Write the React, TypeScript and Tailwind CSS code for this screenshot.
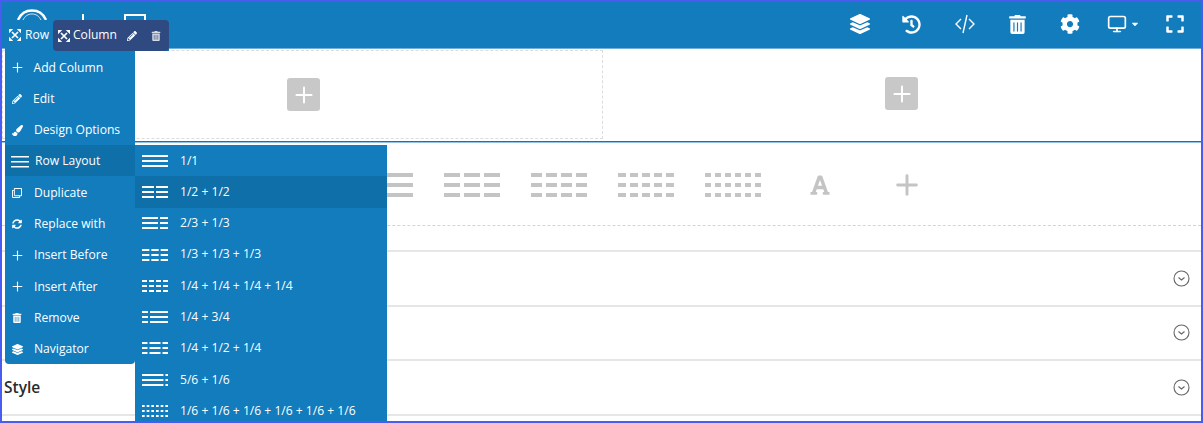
import { Fragment, type ReactNode } from "react";
import { Monitor, Plus } from "lucide-react";
import {
  FaCaretDown,
  FaCog,
  FaExpand,
  FaFont,
  FaHistory,
  FaLayerGroup,
  FaPaintBrush,
  FaPencilAlt,
  FaRegClone,
  FaSyncAlt,
  FaTrashAlt,
} from "react-icons/fa";

// 一行ごとの列比率を三段のバーで描く
function LayoutIcon({ cols, width = 26, h = 2 }: { cols: number[]; width?: number; h?: number }) {
  const total = cols.reduce((a, b) => a + b, 0);
  const gap = 2;
  const unit = (width - gap * (cols.length - 1)) / total;
  return (
    <svg width={width} height="12" viewBox={`0 0 ${width} 12`} className="shrink-0">
      {[0, 5, 10].map((y) => {
        let x = 0;
        return (
          <Fragment key={y}>
            {cols.map((c, i) => {
              const w = c * unit;
              const r = <rect key={i} x={x} y={y} width={w} height={h} fill="#fff" />;
              x += w + gap;
              return r;
            })}
          </Fragment>
        );
      })}
    </svg>
  );
}

function MoveIcon() {
  return (
    <svg width="12" height="12" viewBox="0 0 12 12" fill="#fff" className="shrink-0">
      <path d="M3 3l6 6M9 3l-6 6" stroke="#fff" strokeWidth="1.7" />
      <path d="M0 0H4.2L0 4.2zM7.8 0H12V4.2zM12 7.8V12H7.8zM4.2 12H0V7.8z" />
    </svg>
  );
}

function CodeIcon() {
  return (
    <svg width="20" height="20" viewBox="0 0 20 20" fill="none" stroke="#fff" strokeWidth="1.4" className="shrink-0 mr-[33px]">
      <path d="M6 5L1 10l5 5M14 5l5 5-5 5M12 1L8 19" />
    </svg>
  );
}

const rowMenu: { label: string; icon: ReactNode; ml: string; active?: boolean }[] = [
  { label: "Add Column", icon: <Plus size={15} strokeWidth={1.8} />, ml: "ml-[5.5px]" },
  { label: "Edit", icon: <FaPencilAlt size={10} />, ml: "ml-[5px]" },
  { label: "Design Options", icon: <FaPaintBrush size={11} />, ml: "ml-[6px]" },
  { label: "Row Layout", icon: <LayoutIcon cols={[1]} width={18} h={1.5} />, ml: "ml-[3px]", active: true },
  { label: "Duplicate", icon: <FaRegClone size={10} />, ml: "ml-[6px]" },
  { label: "Replace with", icon: <FaSyncAlt size={10} />, ml: "ml-[6px]" },
  { label: "Insert Before", icon: <Plus size={15} strokeWidth={1.8} />, ml: "ml-[6px]" },
  { label: "Insert After", icon: <Plus size={15} strokeWidth={1.8} />, ml: "ml-[6px]" },
  { label: "Remove", icon: <FaTrashAlt size={10} />, ml: "ml-[6px]" },
  { label: "Navigator", icon: <FaLayerGroup size={11} />, ml: "ml-[6px]" },
];

const layouts: { label: string; cols: number[]; active?: boolean }[] = [
  { label: "1/1", cols: [1] },
  { label: "1/2 + 1/2", cols: [1, 1], active: true },
  { label: "2/3 + 1/3", cols: [2, 1] },
  { label: "1/3 + 1/3 + 1/3", cols: [1, 1, 1] },
  { label: "1/4 + 1/4 + 1/4 + 1/4", cols: [1, 1, 1, 1] },
  { label: "1/4 + 3/4", cols: [1, 3] },
  { label: "1/4 + 1/2 + 1/4", cols: [1, 2, 1] },
  { label: "5/6 + 1/6", cols: [5, 0.6] },
  { label: "1/6 + 1/6 + 1/6 + 1/6 + 1/6 + 1/6", cols: [1, 1, 1, 1, 1, 1] },
];

function LargeLayout({ cols }: { cols: number[] }) {
  return (
    <div className="flex flex-col gap-[5.7px] w-[56px]">
      {[0, 1, 2].map((r) => (
        <div key={r} className="flex gap-[4px] h-[4px]">
          {cols.map((c, i) => (
            <div key={i} className="h-full bg-[#c4c4c4]" style={{ flexGrow: c, flexBasis: 0 }} />
          ))}
        </div>
      ))}
    </div>
  );
}

function AddBox() {
  return (
    <div className="w-[33px] h-[33px] rounded-[3px] bg-[#c8c8c8] flex items-center justify-center">
      <Plus size={26} strokeWidth={1.8} color="#fff" />
    </div>
  );
}

function Section({ title }: { title?: string }) {
  return (
    <div className="h-[54.5px] border-b-2 border-[#e6e6e6] flex items-center justify-between pl-[2px] pr-[11px]">
      <span className="text-[15.5px] font-semibold text-[#2b2b2b]">{title}</span>
      <svg width="17" height="17" viewBox="0 0 17 17" fill="none" stroke="#666" strokeWidth="1.1">
        <circle cx="8.5" cy="8.5" r="7.5" />
        <path d="M5.5 7.5l3 2.5 3-2.5" />
      </svg>
    </div>
  );
}

export default function App() {
  return (
    <div
      className="relative w-[1203px] h-[423px] overflow-hidden bg-white border-2 border-[#4a5cf0]"
      style={{ fontFamily: '"Open Sans", "Noto Sans", sans-serif' }}
    >
      {/* ヘッダー */}
      <header className="h-[47px] bg-[#127cbd] flex items-center justify-end text-white border-b border-[#6fb1dc] pr-[16px] pb-[2px]">
        <FaLayerGroup size={20} className="mr-[32px]" />
        <FaHistory size={19} className="mr-[34px]" />
        <CodeIcon />
        <FaTrashAlt size={19} className="mr-[33px]" />
        <FaCog size={20} className="mr-[27px]" />
        <Monitor size={20} strokeWidth={2} />
        <FaCaretDown size={10} className="ml-[3px] mr-[25px]" />
        <FaExpand size={20} />
      </header>

      {/* カラム */}
      <div className="h-[93px] flex border-b border-[#1a73ab]">
        <div className="w-[601px] h-[89px] mt-px border border-dashed border-[#dcdcdc] flex items-center justify-center pl-[2px]">
          <AddBox />
        </div>
        <div className="flex-1 flex items-center justify-center pr-[1px] pb-[3px]">
          <AddBox />
        </div>
      </div>
      <div className="h-px bg-[#8fc4e6]" />

      {/* 要素追加 */}
      <div className="h-[83px] border-b border-dashed border-[#d4d4d4] flex items-center pl-[355px] pt-[2px] gap-[31px]">
        <LargeLayout cols={[1, 1]} />
        <LargeLayout cols={[1, 1, 1]} />
        <LargeLayout cols={[1, 1, 1, 1]} />
        <LargeLayout cols={[1, 1, 1, 1, 1]} />
        <LargeLayout cols={[1, 1, 1, 1, 1, 1]} />
        <span className="w-[56px] flex justify-center">
          <FaFont size={22} color="#c4c4c4" />
        </span>
        <span className="w-[56px] flex justify-center">
          <Plus size={32} strokeWidth={2.2} color="#c4c4c4" />
        </span>
      </div>

      <div className="h-[26px] border-b-2 border-[#e6e6e6]" />
      <Section />
      <Section />
      <Section title="Style" />

      {/* 行メニュー */}
      <div className="absolute left-[3px] top-[49px] w-[130px] bg-[#127cbd] text-white rounded-b-[4px] text-[12.1px]">
        {rowMenu.map((m) => (
          <div key={m.label} className={`h-[31.3px] pt-[2px] flex items-center ${m.active ? "bg-[#0f6fa9]" : ""}`}>
            <span className={`flex justify-center ${m.active ? "w-[24px] ml-[3px]" : "w-[22px] ml-[1px]"}`}>{m.icon}</span>
            <span className={m.ml}>{m.label}</span>
          </div>
        ))}
      </div>

      {/* レイアウトサブメニュー */}
      <div className="absolute left-[133px] top-[143px] w-[252px] bg-[#127cbd] text-white text-[12.1px]">
        {layouts.map((l) => (
          <div key={l.label} className={`h-[31.3px] flex items-center pl-[7px] gap-[12px] ${l.active ? "bg-[#0f6fa9]" : ""}`}>
            <LayoutIcon cols={l.cols} />
            <span>{l.label}</span>
          </div>
        ))}
      </div>

      {/* Row / Column ツールバー */}
      <div className="absolute left-[3px] top-[18px] h-[31px] flex items-center bg-[#127cbd] text-white text-[12.1px] rounded-tl-[4px]">
        <div className="flex items-center gap-[4px] pl-[4px] w-[48px]">
          <MoveIcon />
          <span>Row</span>
        </div>
        <div className="h-[31px] flex items-center bg-[#2f4a80] rounded-[4px] pl-[5px] w-[116px]">
          <MoveIcon />
          <span className="ml-[3px]">Column</span>
          <FaPencilAlt size={10} className="ml-[10px]" />
          <FaTrashAlt size={10} className="ml-[14px] opacity-80" />
        </div>
      </div>

      {/* ツールバーに隠れたヘッダー左のアイコン */}
      <svg width="30" height="11" viewBox="0 0 30 11" fill="none" stroke="#fff" className="absolute left-[15px] top-[7px]">
        <path d="M1 11C4 4 9 1.5 15 1.5S26 4 29 11" strokeWidth="2.4" />
        <path d="M6 11c2-4 5-6 9-6s7 2 9 6" strokeWidth="0.8" />
      </svg>
      <div className="absolute left-[80px] top-[12px] w-[2px] h-[6px] bg-white" />
      <div className="absolute left-[122px] top-[12px] w-[22px] h-[6px] border-2 border-b-0 border-white" />
    </div>
  );
}
